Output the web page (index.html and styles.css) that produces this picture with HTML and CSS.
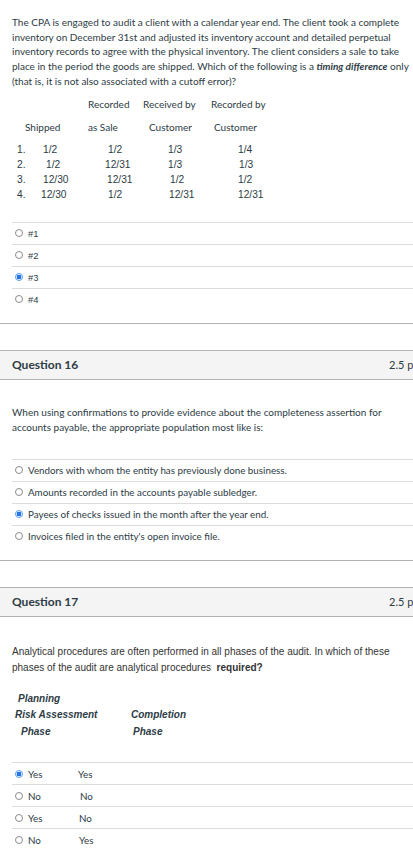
FILE: index.html
```html
<!DOCTYPE html>
<html lang="en">
<head>
<meta charset="utf-8">
<title>Quiz</title>
<link rel="stylesheet" href="styles.css">
</head>
<body>
<div class="page">

  <section class="question q-first">
    <div class="q-body">
      <p class="q-text">The CPA is engaged to audit a client with a calendar year end. The client took a complete<br>inventory on December 31st and adjusted its inventory account and detailed perpetual<br>inventory records to agree with the physical inventory. The client considers a sale to take<br>place in the period the goods are shipped. Which of the following is a <strong><em>timing difference</em></strong> only<br>(that is, it is not also associated with a cutoff error)?</p>
      <div class="tbl">
        <div class="th th1"><span></span><span>Recorded</span><span>Received by</span><span>Recorded by</span></div>
        <div class="th th2"><span>Shipped</span><span>as Sale</span><span>Customer</span><span>Customer</span></div>
        <div class="tr"><span>1.</span><span>1/2</span><span>1/2</span><span>1/3</span><span>1/4</span></div>
        <div class="tr"><span>2.</span><span class="n3">1/2</span><span class="m3">12/31</span><span>1/3</span><span class="n1">1/3</span></div>
        <div class="tr"><span>3.</span><span>12/30</span><span class="m1">12/31</span><span class="n2">1/2</span><span>1/2</span></div>
        <div class="tr"><span>4.</span><span class="m2">12/30</span><span>1/2</span><span class="n1">12/31</span><span>12/31</span></div>
      </div>
    </div>
    <ul class="answers arial">
      <li><span class="radio"></span><span>#1</span></li>
      <li><span class="radio"></span><span>#2</span></li>
      <li><span class="radio checked"></span><span>#3</span></li>
      <li><span class="radio"></span><span>#4</span></li>
    </ul>
  </section>

  <section class="question">
    <header class="q-header"><h2>Question 16</h2><span class="pts">2.5 pts</span></header>
    <div class="q-body">
      <p class="q-text q-text16">When using confirmations to provide evidence about the completeness assertion for<br>accounts payable, the appropriate population most like is:</p>
    </div>
    <ul class="answers">
      <li><span class="radio"></span><span>Vendors with whom the entity has previously done business.</span></li>
      <li><span class="radio"></span><span>Amounts recorded in the accounts payable subledger.</span></li>
      <li><span class="radio checked"></span><span>Payees of checks issued in the month after the year end.</span></li>
      <li><span class="radio"></span><span>Invoices filed in the entity's open invoice file.</span></li>
    </ul>
  </section>

  <section class="question">
    <header class="q-header"><h2>Question 17</h2><span class="pts">2.5 pts</span></header>
    <div class="q-body">
      <p class="q-text q-text17">Analytical procedures are often performed in all phases of the audit. In which of these<br>phases of the audit are analytical procedures &nbsp;<strong>required?</strong></p>
      <div class="phases">
        <div class="ph-row"><span class="ph-a1">Planning</span></div>
        <div class="ph-row"><span class="ph-a2">Risk Assessment</span><span class="ph-b1">Completion</span></div>
        <div class="ph-row"><span class="ph-a3">Phase</span><span class="ph-b2">Phase</span></div>
      </div>
    </div>
    <ul class="answers">
      <li><span class="radio checked"></span><span class="c1">Yes</span><span>Yes</span></li>
      <li><span class="radio"></span><span class="c1">No</span><span class="c2n">No</span></li>
      <li><span class="radio"></span><span class="c1">Yes</span><span class="c2m">No</span></li>
      <li><span class="radio"></span><span class="c1">No</span><span class="c2m">Yes</span></li>
    </ul>
  </section>

</div>
</body>
</html>
```

FILE: styles.css
```css
html, body {
  margin: 0;
  padding: 0;
  background: #ffffff;
  overflow: hidden;
}

body {
  font-family: Lato, "Noto Sans", sans-serif;
  color: #2d3b45;
}

.page {
  width: 434px;
}

.question {
  border-bottom: 1px solid #b3b3b3;
  margin-bottom: 26px;
}

.q-header {
  display: flex;
  justify-content: space-between;
  align-items: center;
  height: 28px;
  padding: 0 12px;
  background: #f4f4f4;
  border-top: 1px solid #b3b3b3;
  border-bottom: 1px solid #b3b3b3;
}

.q-header h2 {
  margin: 0;
  font-size: 12px;
  font-weight: 700;
  color: #2d3b45;
}

.pts {
  font-size: 11px;
  color: #2d3b45;
}

.q-body {
  padding: 0 12px;
}

.q-text {
  margin: 0;
  font-size: 10px;
  line-height: 14.7px;
  white-space: nowrap;
}

.q-first .q-text {
  padding-top: 15px;
}

.q-text16 {
  padding-top: 25px;
  margin-bottom: 23px;
  line-height: 15.5px;
}

.q-text17 {
  padding-top: 27px;
  line-height: 16px;
  font-family: "Liberation Sans", Arial, sans-serif;
  font-size: 10px;
  color: #333333;
}

/* table of dates */
.tbl {
  margin-top: 8px;
  margin-bottom: 20px;
}

.th {
  display: grid;
  font-size: 10px;
  line-height: 15px;
  white-space: nowrap;
}

.th1 {
  grid-template-columns: 76px 55px 68px auto;
}

.th2 {
  margin-top: 8px;
  margin-bottom: 7px;
  padding-left: 13px;
  grid-template-columns: 63px 61px 65px auto;
}

.tr {
  display: grid;
  grid-template-columns: 26px 65px 60px 70px auto;
  padding-left: 5px;
  font-family: "Liberation Sans", Arial, sans-serif;
  font-size: 10.2px;
  line-height: 15px;
  white-space: nowrap;
}

.n1 { padding-left: 1px; }
.n2 { padding-left: 2px; }
.n3 { padding-left: 3px; }
.m1 { margin-left: -1px; }
.m2 { margin-left: -2px; }
.m3 { margin-left: -3px; }

/* answers */
.answers {
  list-style: none;
  margin: 0 0 0 12px;
  padding: 0 0 13px;
  font-size: 9.8px;
  color: #2d3b45;
}

.answers.arial {
  font-family: "Liberation Sans", Arial, sans-serif;
  font-size: 9.4px;
}

.answers li {
  display: flex;
  align-items: center;
  height: 21px;
  border-top: 1px solid #dcdcdc;
  white-space: nowrap;
}

.radio {
  box-sizing: border-box;
  flex: none;
  width: 8px;
  height: 8px;
  margin: 0 5px 0 3px;
  border: 1px solid #8c8c8c;
  border-radius: 50%;
  background: #ffffff;
}

.radio.checked {
  border-color: #5c9bf2;
  background: radial-gradient(circle, #2475ea 0 2.2px, #ffffff 2.6px 100%);
}

.c1 {
  width: 50px;
}

.c2n { padding-left: 2px; }
.c2m { padding-left: 1px; }

/* phases header */
.phases {
  margin-top: 15px;
  margin-bottom: 22px;
  font-family: "Liberation Sans", Arial, sans-serif;
  font-size: 10px;
  font-weight: 700;
  font-style: italic;
  line-height: 16.5px;
  color: #2d3b45;
}

.ph-row {
  display: flex;
  white-space: nowrap;
}

.ph-a1 { padding-left: 6px; }
.ph-a2 { padding-left: 3px; width: 115px; }
.ph-a3 { padding-left: 9px; width: 111px; }
.ph-b1 { padding-left: 1px; }
.ph-b2 { padding-left: 1px; }
```
